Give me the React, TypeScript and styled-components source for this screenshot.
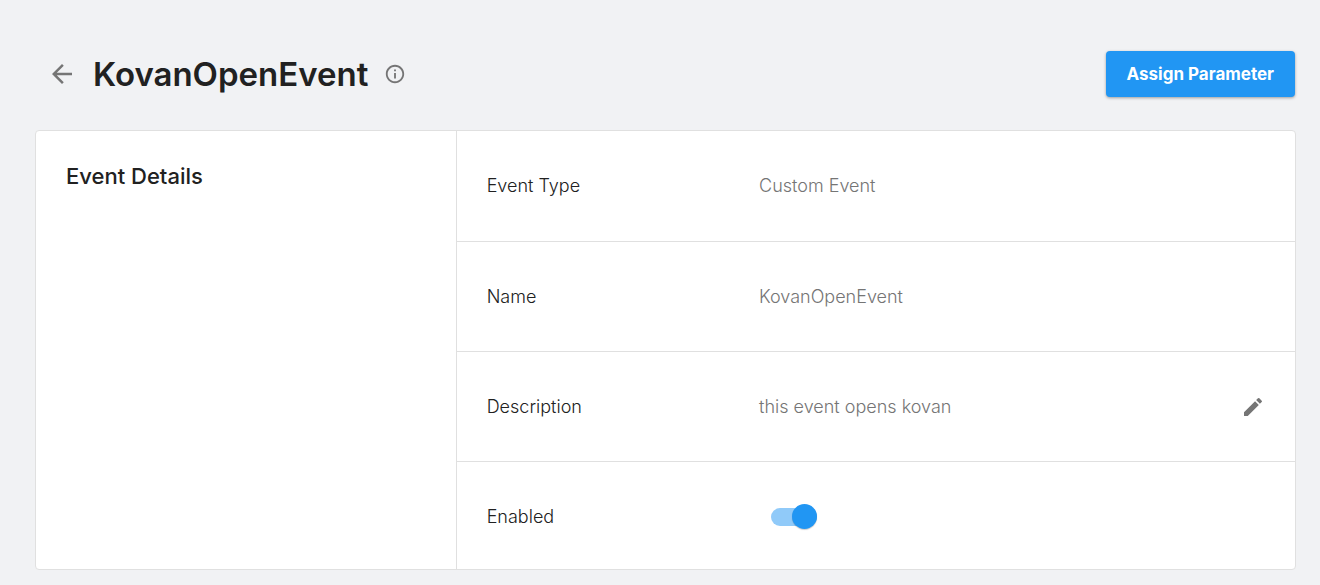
import React, { useState } from "react";
import styled, { createGlobalStyle } from "styled-components";
import { MdArrowBack, MdInfoOutline, MdEdit } from "react-icons/md";

const GlobalStyle = createGlobalStyle`
  *, *::before, *::after { box-sizing: border-box; }
  body {
    margin: 0;
    background: #f1f2f4;
    color: #212121;
    font-family: Inter, "Liberation Sans", sans-serif;
  }
`;

const Page = styled.main`
  padding: 51px 24px 15px 35px;
`;

const Header = styled.header`
  display: flex;
  align-items: center;
  justify-content: space-between;
  padding-right: 1px;
  margin-bottom: 33px;
`;

const TitleGroup = styled.div`
  display: flex;
  align-items: center;
  padding-left: 12px;
`;

const Title = styled.h1`
  margin: 0 16px;
  font-size: 33px;
  line-height: 46px;
  font-weight: 600;
`;

const IconButton = styled.button`
  display: flex;
  padding: 0;
  border: 0;
  background: none;
  color: #757575;
  cursor: pointer;
`;

const PrimaryButton = styled.button`
  padding: 11px 21px;
  border: 0;
  border-radius: 4px;
  background: #2196f3;
  color: #fff;
  font-family: inherit;
  font-size: 17px;
  line-height: 24px;
  font-weight: 700;
  white-space: nowrap;
  box-shadow: 0 1px 3px rgba(0, 0, 0, 0.35);
  cursor: pointer;
`;

const Card = styled.section`
  display: grid;
  grid-template-columns: 1fr 2fr;
  border: 1px solid #e0e0e0;
  border-radius: 4px;
  background: #fff;
`;

const CardHeading = styled.h2`
  margin: 0;
  padding: 30px;
  font-size: 22px;
  line-height: 30px;
  font-weight: 500;
`;

const Fields = styled.div`
  border-left: 1px solid #e0e0e0;
`;

const Row = styled.div`
  display: grid;
  grid-template-columns: 7fr 12fr 1fr;
  align-items: center;
  padding: 43px 30px;
  font-size: 18px;
  line-height: 24px;
  font-weight: 300;

  & + & { border-top: 1px solid #e0e0e0; padding-bottom: 42px; }
  &:last-child { padding-bottom: 40px; }
`;

const Value = styled.span`
  color: #757575;
`;

const EditButton = styled(IconButton)`
  justify-self: end;
`;

const Switch = styled.input`
  appearance: none;
  position: relative;
  width: 46px;
  height: 18px;
  margin: 0 0 0 12px;
  border-radius: 9px;
  background: #bdbdbd;
  cursor: pointer;

  &::before {
    content: "";
    position: absolute;
    top: -4px;
    left: 0;
    width: 25px;
    height: 25px;
    border-radius: 50%;
    background: #fafafa;
    box-shadow: 0 1px 1px rgba(0, 0, 0, 0.2);
  }

  &:checked { background: #90caf9; }
  &:checked::before { left: 21px; background: #2196f3; }
`;

export default function App() {
  const [enabled, setEnabled] = useState(true);
  return (
    <>
      <GlobalStyle />
      <Page>
        <Header>
          <TitleGroup>
            <IconButton aria-label="Back"><MdArrowBack size={30} /></IconButton>
            <Title>KovanOpenEvent</Title>
            <IconButton aria-label="About this event"><MdInfoOutline size={22} /></IconButton>
          </TitleGroup>
          <PrimaryButton>Assign Parameter</PrimaryButton>
        </Header>
        <Card>
          <CardHeading>Event Details</CardHeading>
          <Fields>
            <Row>
              <span>Event Type</span>
              <Value>Custom Event</Value>
            </Row>
            <Row>
              <span>Name</span>
              <Value>KovanOpenEvent</Value>
            </Row>
            <Row>
              <span>Description</span>
              <Value>this event opens kovan</Value>
              <EditButton aria-label="Edit description"><MdEdit size={24} /></EditButton>
            </Row>
            <Row>
              <label htmlFor="enabled">Enabled</label>
              <Switch
                id="enabled"
                type="checkbox"
                role="switch"
                checked={enabled}
                onChange={(e) => setEnabled(e.target.checked)}
              />
            </Row>
          </Fields>
        </Card>
      </Page>
    </>
  );
}
